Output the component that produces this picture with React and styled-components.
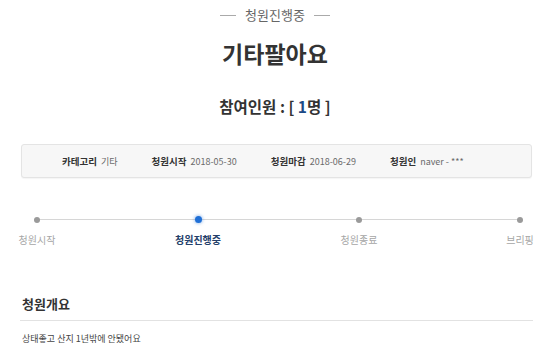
import React from "react";
import styled, { createGlobalStyle } from "styled-components";

const Global = createGlobalStyle`
  html, body { margin: 0; padding: 0; background: #fff; }
  body { font-family: "Noto Sans CJK KR", "Noto Sans", sans-serif; color: #333; }
  * { box-sizing: border-box; }
`;

const Page = styled.div`
  width: 550px;
  height: 364px;
  overflow: hidden;
  display: flex;
  flex-direction: column;
`;

const Status = styled.div`
  margin-top: 5px;
  height: 20px;
  display: flex;
  align-items: center;
  justify-content: center;
  gap: 9px;
  font-size: 13px;
  line-height: 20px;
  color: #666;
  &::before, &::after {
    content: "";
    width: 16px;
    height: 1px;
    background: #aaa;
  }
`;

const Title = styled.h1`
  margin: 13px 0 0;
  height: 30px;
  line-height: 30px;
  text-align: center;
  font-size: 23px;
  font-weight: 700;
  color: #333;
`;

const Participants = styled.div`
  margin-top: 26px;
  height: 24px;
  line-height: 24px;
  text-align: center;
  font-size: 15.5px;
  font-weight: 700;
  color: #333;
`;

const Count = styled.span`
  color: #1c4a86;
`;

const InfoBox = styled.div`
  margin: 26px 0 0 21px;
  width: 511px;
  height: 34px;
  background: #f7f7f7;
  border: 1px solid #e4e4e4;
  border-radius: 3px;
  box-shadow: 0 1px 1px rgba(0,0,0,0.04);
  display: flex;
  align-items: center;
  padding-left: 40px;
  gap: 34px;
`;

const InfoItem = styled.div`
  display: flex;
  align-items: baseline;
  gap: 4px;
`;

const InfoLabel = styled.span`
  font-size: 9.5px;
  font-weight: 700;
  color: #333;
`;

const InfoValue = styled.span`
  font-size: 9px;
  color: #6a6a6a;
`;

const Progress = styled.div`
  position: relative;
  margin: 38px 0 0 19px;
  width: 519px;
  display: flex;
  justify-content: space-between;
  &::before {
    content: "";
    position: absolute;
    left: 18px;
    right: 18px;
    top: 3px;
    height: 1px;
    background: #d6d6d6;
  }
`;

const Step = styled.div`
  position: relative;
  width: 36px;
  display: flex;
  flex-direction: column;
  align-items: center;
  gap: 9px;
`;

const Dot = styled.span`
  width: ${p => (p.$active ? 7 : 6)}px;
  height: ${p => (p.$active ? 7 : 6)}px;
  margin-top: ${p => (p.$active ? 0 : 0.5)}px;
  margin-bottom: ${p => (p.$active ? 0 : 0.5)}px;
  border-radius: 50%;
  background: ${p => (p.$active ? "#1f6fd6" : "#9a9a9a")};
  box-shadow: ${p => (p.$active ? "0 0 3px 1px rgba(31,111,214,0.35)" : "none")};
`;

const StepLabel = styled.span`
  white-space: nowrap;
  font-size: 10px;
  line-height: 16px;
  font-weight: ${p => (p.$active ? 700 : 400)};
  color: ${p => (p.$active ? "#24406a" : "#a6a6a6")};
`;

const Section = styled.section`
  margin: 46px 17px 0 20px;
`;

const SectionTitle = styled.h2`
  margin: 0;
  padding: 0 0 6px 2px;
  font-size: 13px;
  line-height: 20px;
  font-weight: 700;
  color: #333;
  border-bottom: 1px solid #e2e2e2;
`;

const Body = styled.p`
  margin: 10px 0 0 2px;
  font-size: 9px;
  line-height: 16px;
  color: #444;
`;

const steps = [
  { label: "청원시작" },
  { label: "청원진행중", active: true },
  { label: "청원종료" },
  { label: "브리핑" },
];

export default function App() {
  return (
    <Page>
      <Global />
      <Status>청원진행중</Status>
      <Title>기타팔아요</Title>
      <Participants>
        참여인원 : [ <Count>1</Count>명 ]
      </Participants>
      <InfoBox>
        <InfoItem><InfoLabel>카테고리</InfoLabel><InfoValue>기타</InfoValue></InfoItem>
        <InfoItem><InfoLabel>청원시작</InfoLabel><InfoValue>2018-05-30</InfoValue></InfoItem>
        <InfoItem><InfoLabel>청원마감</InfoLabel><InfoValue>2018-06-29</InfoValue></InfoItem>
        <InfoItem><InfoLabel>청원인</InfoLabel><InfoValue>naver - ***</InfoValue></InfoItem>
      </InfoBox>
      <Progress>
        {steps.map(s => (
          <Step key={s.label}>
            <Dot $active={s.active} />
            <StepLabel $active={s.active}>{s.label}</StepLabel>
          </Step>
        ))}
      </Progress>
      <Section>
        <SectionTitle>청원개요</SectionTitle>
        <Body>상태좋고 산지 1년밖에 안됐어요</Body>
      </Section>
    </Page>
  );
}
